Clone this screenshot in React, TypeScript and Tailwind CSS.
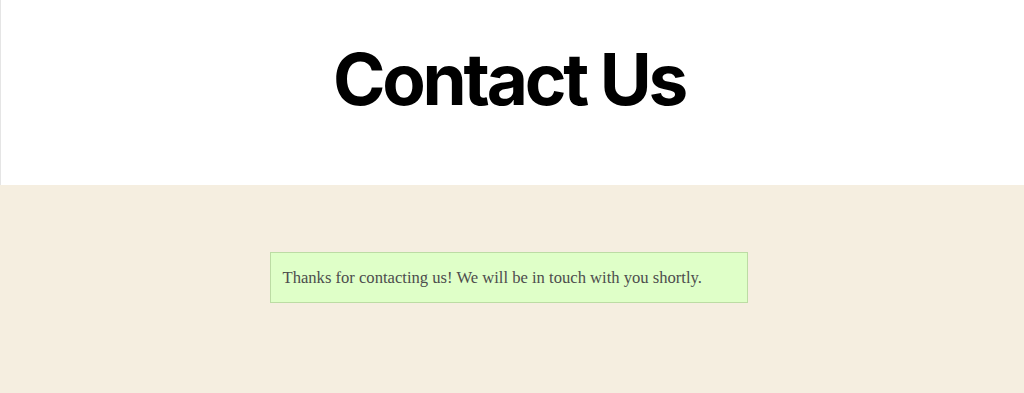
export default function App() {
  return (
    <div className="min-h-[393px] w-full bg-[#f5eee0]">
      {/* Header */}
      <header className="flex h-[185px] items-center justify-center border-l border-[#e5e5e5] bg-white">
        <h1 className="mt-[-26px] ml-[-7px] font-['Inter',sans-serif] text-[71px] font-bold leading-none tracking-[-0.045em] text-black">
          Contact Us
        </h1>
      </header>

      {/* Confirmation */}
      <section className="flex justify-center pt-[67px] pb-[90px]">
        <div className="ml-[-7px] w-[478px] border border-[#bcdca4] bg-[#dfffc8] px-[12px] py-[13px]">
          <p className="font-['Liberation_Serif',serif] text-[16.6px] leading-[23px] text-[#4d4d4d]">
            Thanks for contacting us! We will be in touch with you shortly.
          </p>
        </div>
      </section>
    </div>
  );
}
